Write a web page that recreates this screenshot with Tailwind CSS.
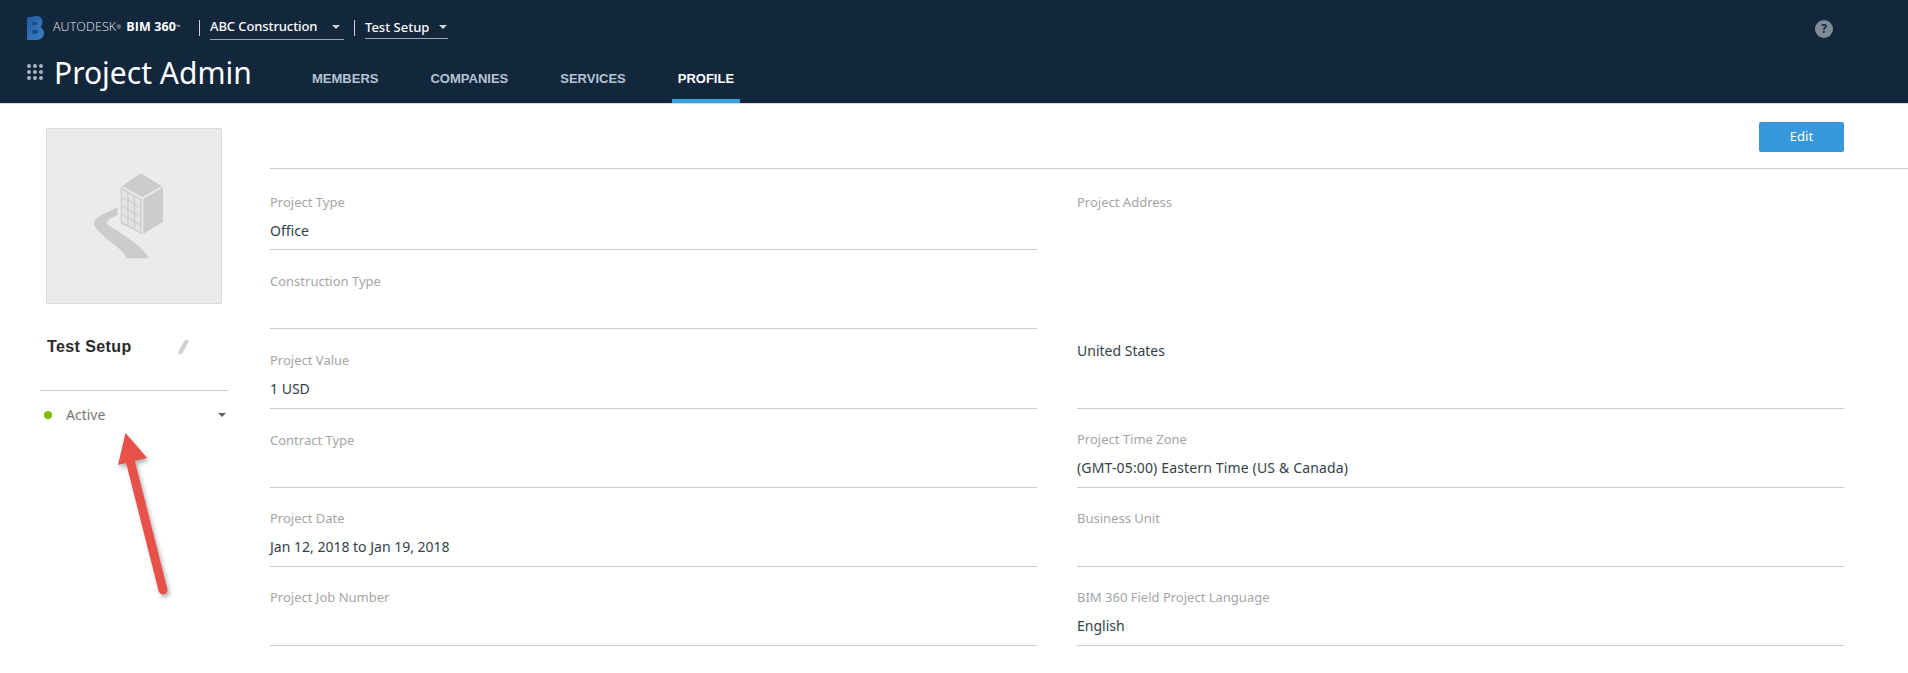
<!DOCTYPE html>
<html lang="en">
<head>
  <meta charset="UTF-8" />
  <title>Project Admin</title>
  <script src="https://cdn.jsdelivr.net/npm/@tailwindcss/browser@4"></script>
</head>
<body class="relative bg-white h-[673px] overflow-hidden font-['Noto_Sans',sans-serif]">
  <!-- Top header -->
  <header class="h-[104px] bg-[#12263c] border-b border-[#d8d8d8] flex flex-col">
    <div class="h-[58px] flex items-start pl-[27px] pr-[75px] text-white">
      <svg class="mt-[16px] w-[17px] h-[24px]" viewBox="0 0 17 24">
        <defs><linearGradient id="logoBlue" x1="0" y1="0" x2="1" y2="1"><stop offset="0" stop-color="#1f5c9f" /><stop offset="1" stop-color="#3f80c6" /></linearGradient></defs>
        <path fill="url(#logoBlue)" d="M0 1.500 L9 0 C14 0 15.500 3 15.500 6 C15.500 8.500 14.500 10 13.500 11 C16 12.500 17 15 17 17 C17 21 14 24 9 24 L0 24 Z" />
        <path fill="#1b4c80" d="M5.500 6 L9 6 C10 6 10.500 7 10 8 C9.500 9 7 9.500 5.500 9 Z M5.500 14 L10 14 C11 14 11.500 15.500 10.500 17 C9.500 18 7 18 5.500 17.500 Z" />
      </svg>
      <div class="ml-[9px] mt-[18px] text-[12.5px] leading-[18px] font-['Open_Sans',sans-serif] tracking-[0.1px] w-[146px] whitespace-nowrap"><span class="font-light text-[#e3e8ec]">AUTODESK</span><span class="align-top text-[6px] text-[#c8d0d8]">®</span><span class="ml-[5px] font-bold">BIM 360</span><span class="align-top text-[6px] text-[#c8d0d8]">™</span></div>
      <div class="mt-[20px] w-px h-[16px] bg-white/80"></div>
      <div class="ml-[10px] mt-[15px] w-[134px] h-[25px] border-b border-[#9aa6b2] flex justify-between pr-[2px] text-[13px] leading-[23px] font-medium"><span class="tracking-[-0.1px]">ABC Construction</span><span class="mt-[10px] w-0 h-0 border-x-[4px] border-x-transparent border-t-[4px] border-t-white/80 mr-[2px]"></span></div>
      <div class="ml-[10px] mt-[20px] w-px h-[16px] bg-white/80"></div>
      <div class="ml-[10px] mt-[15px] w-[83px] h-[24px] border-b border-[#9aa6b2] flex justify-between text-[13px] leading-[25px] font-medium"><span>Test Setup</span><span class="mt-[10px] w-0 h-0 border-x-[4px] border-x-transparent border-t-[4px] border-t-white/80 mr-[1px]"></span></div>
      <div class="ml-auto mt-[20px] w-[18px] h-[18px] rounded-full bg-[#7f8c98] flex items-center justify-center text-[12px] leading-none font-bold text-[#12263c]">?</div>
    </div>
    <div class="flex-1 flex pl-[27px]">
      <div class="mt-[6px] grid grid-cols-3 gap-[2px] w-[16px] h-[16px]">
        <i class="w-[4px] h-[4px] rounded-full bg-[#aab4be]"></i><i class="w-[4px] h-[4px] rounded-full bg-[#aab4be]"></i><i class="w-[4px] h-[4px] rounded-full bg-[#aab4be]"></i>
        <i class="w-[4px] h-[4px] rounded-full bg-[#aab4be]"></i><i class="w-[4px] h-[4px] rounded-full bg-[#aab4be]"></i><i class="w-[4px] h-[4px] rounded-full bg-[#aab4be]"></i>
        <i class="w-[4px] h-[4px] rounded-full bg-[#aab4be]"></i><i class="w-[4px] h-[4px] rounded-full bg-[#aab4be]"></i><i class="w-[4px] h-[4px] rounded-full bg-[#aab4be]"></i>
      </div>
      <h1 class="ml-[11px] w-[252px] -mt-[4px] text-[30px] leading-[38px] text-white whitespace-nowrap">Project Admin</h1>
      <nav class="flex gap-[40px] font-['Liberation_Sans',sans-serif] text-[13px] font-bold text-[#b5c4d4]">
        <a class="pt-[11px] px-[6px]">MEMBERS</a>
        <a class="pt-[11px] px-[6px]">COMPANIES</a>
        <a class="pt-[11px] px-[6px]">SERVICES</a>
        <a class="pt-[11px] px-[6px] text-white border-b-4 border-[#38a0dc]">PROFILE</a>
      </nav>
    </div>
  </header>

  <main class="flex">
    <!-- Left column -->
    <aside class="w-[270px] shrink-0 pl-[40px] pr-[42px] pt-[24px]">
      <div class="ml-[6px] w-[176px] h-[176px] bg-[#ebebeb] border border-[#dcdcdc]">
        <svg class="-m-px" viewBox="0 0 176 176" width="176" height="176">
          <path fill="#cccccc" d="M95 45.300 L115.700 58 L96.300 69.300 L76 58 Z" />
          <path fill="#cccccc" d="M97.300 70.700 L117 59.300 L117 93.700 L97.300 106 Z" />
          <path fill="#cccccc" d="M74.700 59.300 L95.700 71.300 L95.700 106 L74.700 95.300 Z" />
          <g fill="#e2e2e2" transform="translate(76 61.500) skewY(29)">
            <rect x="0" y="0" width="5.300" height="7.500" /><rect x="6.500" y="0" width="5.300" height="7.500" /><rect x="13" y="0" width="5.300" height="7.500" />
            <rect x="0" y="8.500" width="5.300" height="7.500" /><rect x="6.500" y="8.500" width="5.300" height="7.500" /><rect x="13" y="8.500" width="5.300" height="7.500" />
            <rect x="0" y="17" width="5.300" height="7.500" /><rect x="6.500" y="17" width="5.300" height="7.500" /><rect x="13" y="17" width="5.300" height="7.500" />
            <rect x="0" y="25.500" width="5.300" height="7" /><rect x="6.500" y="25.500" width="5.300" height="7" /><rect x="13" y="25.500" width="5.300" height="7" />
          </g>
          <path fill="#cccccc" d="M71.700 79.300 C60 85 48 89 48 95.300 C48 101 62 112 70 118 C75 122 79 126 80.700 130.300 L103 130.300 C98 120 86 113 76 106 C68 100 60.700 97 60.700 95.300 C60.700 92 66 89.500 71.700 86.700 Z" />
        </svg>
      </div>
      <div class="ml-[7px] mt-[32px] h-[21px] flex items-center justify-between pr-[39px]">
        <span class="font-['Liberation_Sans',sans-serif] text-[16px] font-bold tracking-[0.4px] text-[#2a2a2a]">Test Setup</span>
        <svg class="w-[11px] h-[16px]" viewBox="0 0 11 16"><path fill="#d0d0d0" d="M7.500 0.500 L11 2 L4.500 14 L0.500 16 L1 11 Z" /></svg>
      </div>
      <div class="mt-[33px] border-t border-[#cccccc] h-[48px] flex items-center pl-[4px] pr-[2px]">
        <span class="w-[8px] h-[8px] rounded-full bg-[#7fbc00]"></span>
        <span class="ml-[14px] text-[14px] text-[#777777]">Active</span>
        <span class="ml-auto w-0 h-0 border-x-[4px] border-x-transparent border-t-[4px] border-t-[#666666]"></span>
      </div>
    </aside>

    <!-- Profile fields -->
    <section class="flex-1">
      <div class="h-[65px] border-b border-[#cccccc] flex justify-end pt-[18px] pr-[64px]">
        <button class="w-[85px] h-[30px] rounded-[2px] bg-[#3797dd] text-white text-[13px]">Edit</button>
      </div>
      <div class="mr-[64px] grid grid-cols-2 gap-x-[40px] pt-[1px]">
        <div>
          <div class="h-[80px] border-b border-[#cccccc] pt-[23px]"><p class="text-[13px] leading-[18px] text-[#a5a5a5]">Project Type</p><p class="mt-[10px] text-[14px] leading-[19px] text-[#333f4a]">Office</p></div>
          <div class="h-[79px] border-b border-[#cccccc] pt-[22px]"><p class="text-[13px] leading-[18px] text-[#a5a5a5]">Construction Type</p></div>
          <div class="h-[80px] border-b border-[#cccccc] pt-[22px]"><p class="text-[13px] leading-[18px] text-[#a5a5a5]">Project Value</p><p class="mt-[10px] text-[14px] leading-[19px] text-[#333f4a]">1 USD</p></div>
          <div class="h-[79px] border-b border-[#cccccc] pt-[22px]"><p class="text-[13px] leading-[18px] text-[#a5a5a5]">Contract Type</p></div>
          <div class="h-[79px] border-b border-[#cccccc] pt-[21px]"><p class="text-[13px] leading-[18px] text-[#a5a5a5]">Project Date</p><p class="mt-[10px] text-[14px] leading-[19px] text-[#333f4a]">Jan 12, 2018 to Jan 19, 2018</p></div>
          <div class="h-[79px] border-b border-[#cccccc] pt-[21px]"><p class="text-[13px] leading-[18px] text-[#a5a5a5]">Project Job Number</p></div>
        </div>
        <div>
          <div class="h-[239px] border-b border-[#cccccc] pt-[23px]"><p class="text-[13px] leading-[18px] text-[#a5a5a5]">Project Address</p><p class="mt-[130px] text-[14px] leading-[19px] text-[#333f4a]">United States</p></div>
          <div class="h-[79px] border-b border-[#cccccc] pt-[21px]"><p class="text-[13px] leading-[18px] text-[#a5a5a5]">Project Time Zone</p><p class="mt-[10px] text-[14px] leading-[19px] tracking-[0.15px] text-[#333f4a]">(GMT-05:00) Eastern Time (US &amp; Canada)</p></div>
          <div class="h-[79px] border-b border-[#cccccc] pt-[21px]"><p class="text-[13px] leading-[18px] text-[#a5a5a5]">Business Unit</p></div>
          <div class="h-[79px] border-b border-[#cccccc] pt-[21px]"><p class="text-[13px] leading-[18px] text-[#a5a5a5]">BIM 360 Field Project Language</p><p class="mt-[10px] text-[14px] leading-[19px] text-[#333f4a]">English</p></div>
        </div>
      </div>
    </section>
  </main>

  <!-- Red annotation arrow over the page -->
  <svg class="absolute left-[100px] top-[420px] drop-shadow-[2px_3px_2px_rgba(0,0,0,0.3)]" width="80" height="190" viewBox="0 0 80 190">
    <path fill="none" stroke="#e8504a" stroke-width="9" stroke-linecap="round" d="M63 170 L30 40" />
    <path fill="#e8504a" d="M25.500 13 L47 38 L18 45 Z" />
  </svg>
</body>
</html>
